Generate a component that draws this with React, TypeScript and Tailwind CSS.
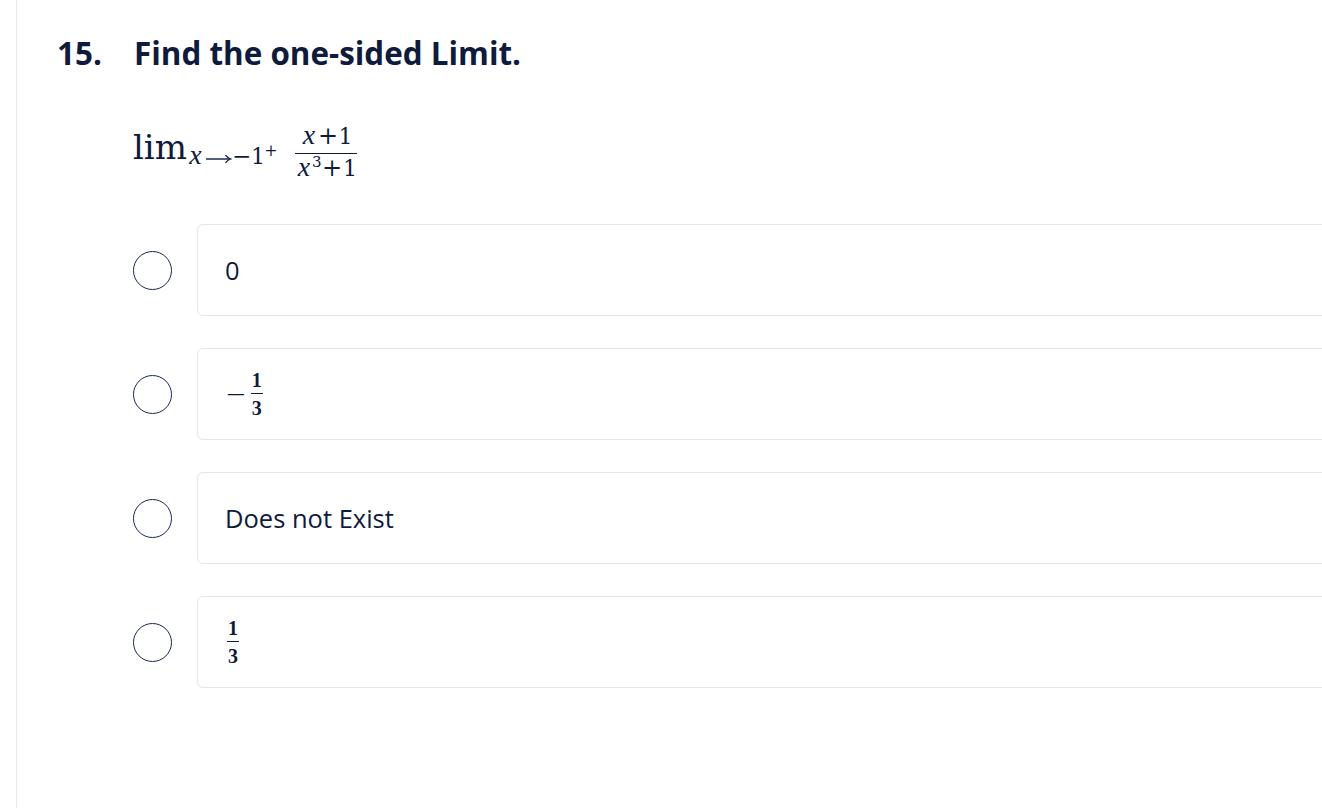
import React from "react";

const serif = "font-['Liberation_Serif','Times_New_Roman',serif]";
const math = "font-['DejaVu_Serif','Liberation_Serif',serif]";
const mathX = "font-['Liberation_Serif',serif] italic text-[28px] leading-[22px]";

// one glyph in a box of fixed width, so the math keeps the wide spacing of the original
const G = ({ w, children, className = "" }: { w: string; children: React.ReactNode; className?: string }) => (
  <span className={`inline-block text-center ${w} ${className}`}>{children}</span>
);

const Arrow = () => (
  <svg width="27" height="12" viewBox="0 0 27 12" className="ml-[1px]">
    <path d="M1 7H25" stroke="#0e1b3d" strokeWidth="1.4" fill="none" />
    <path d="M20.5 3.2Q22.5 6 25.8 7Q22.5 8 20.5 10.8" stroke="#0e1b3d" strokeWidth="1.3" fill="none" />
  </svg>
);

const SmallFrac = ({ top, bottom }: { top: string; bottom: string }) => (
  <span className={`inline-flex flex-col items-center text-[20px] font-bold leading-none ${serif}`}>
    <span className="px-[1px] pb-[3px]">{top}</span>
    <span className="h-px w-full bg-[#0e1b3d]" />
    <span className="px-[1px] pt-[4px]">{bottom}</span>
  </span>
);

const Option = ({ children }: { children: React.ReactNode }) => (
  <div className="flex items-center gap-[25px]">
    <span className="h-[39px] w-[39px] shrink-0 rounded-full border border-[#1c2a4f] bg-white" />
    <div className="-mr-10 flex h-[92px] flex-1 items-center rounded-md border border-[#e5e5ea] pl-[27px] text-[25.5px] text-[#0e1b3d]">
      {children}
    </div>
  </div>
);

const App = () => {
  return (
    <div className="min-h-[808px] w-full overflow-hidden bg-white pl-4 font-['Open_Sans',sans-serif] text-[#0e1b3d]">
      <div className="min-h-[808px] border-l border-[#e8e8ec] pl-[40px] pt-[31px]">
        <h1 className="flex text-[31.4px] font-bold leading-[44px]">
          <span className="w-[77px]">15.</span>
          <span>Find the one-sided Limit.</span>
        </h1>

        <div className="pl-[76px]">
          {/* limit expression */}
          <div className={`mt-[53px] flex h-[64px] items-baseline ${math}`}>
            <span className="text-[34px] leading-[38px]">lim</span>
            <span className="relative top-[5px] flex items-baseline text-[22px] leading-none">
              <G w="w-[17px]" className={mathX}>x</G>
              <Arrow />
              <G w="w-[19px]" className="text-[23px]">−</G>
              <G w="w-[13px]">1</G>
              <G w="w-[14px]" className="relative -top-[8px] text-[16px]">+</G>
            </span>
            <span className="relative -top-[15px] ml-[17px] inline-flex w-[62px] flex-col items-center text-[22px] leading-none">
              <span className="flex items-baseline">
                <G w="w-[17px]" className={mathX}>x</G>
                <G w="w-[21px]" className="text-[24px]">+</G>
                <G w="w-[13px]">1</G>
              </span>
              <span className="mt-[5px] h-px w-full bg-[#0e1b3d]" />
              <span className="mt-[2px] flex items-baseline">
                <G w="w-[16px]" className={mathX}>x</G>
                <G w="w-[9px]" className="relative -top-[9px] text-[15px]">3</G>
                <G w="w-[22px]" className="text-[24px]">+</G>
                <G w="w-[13px]">1</G>
              </span>
            </span>
          </div>

          <div className="mt-[32px] flex flex-col gap-8">
            <Option>0</Option>
            <Option>
              <span className="flex items-center">
                <span className="mr-[4px] font-['DejaVu_Sans',sans-serif] text-[26px] font-light leading-none">−</span>
                <SmallFrac top="1" bottom="3" />
              </span>
            </Option>
            <Option>Does not Exist</Option>
            <Option>
              <span className="ml-[2px] flex items-center">
                <SmallFrac top="1" bottom="3" />
              </span>
            </Option>
          </div>
        </div>
      </div>
    </div>
  );
};

export default App;
